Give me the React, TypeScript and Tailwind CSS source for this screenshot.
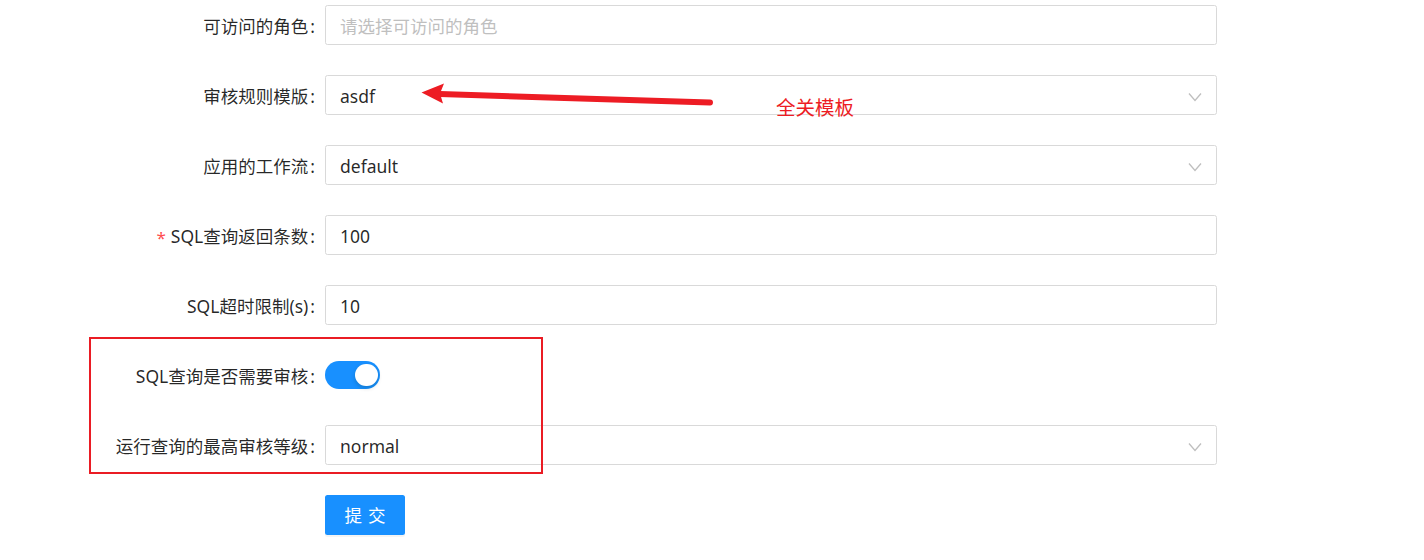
import React from "react";

const font = { fontFamily: '"Noto Sans", "Noto Sans CJK SC", sans-serif' };

function Chevron() {
  return (
    <svg width="14" height="10" viewBox="0 0 14 10" className="shrink-0">
      <path d="M1 1.5 L7 8.5 L13 1.5" fill="none" stroke="#bfbfbf" strokeWidth="1.3" />
    </svg>
  );
}

function Label({ text, required }: { text: string; required?: boolean }) {
  return (
    <div className="w-[325px] h-full shrink-0 flex justify-end items-center pt-[4px] text-[17.5px] text-black/85 leading-none">
      {required && <span className="text-[#ff4d4f] mr-[5px] text-[17px]">*</span>}
      <span>{text}</span>
      <span className="ml-[2px] mr-[10px]">:</span>
    </div>
  );
}

function Field({
  value,
  placeholder,
  select,
}: {
  value?: string;
  placeholder?: string;
  select?: boolean;
}) {
  return (
    <div className="w-[892px] h-[40px] border border-[#d9d9d9] rounded-[2.5px] bg-white flex items-center justify-between pt-[4px] pl-[14px] pr-[14px] text-[17.5px] leading-none">
      {value ? (
        <span className="text-black/85">{value}</span>
      ) : (
        <span className="text-[#bfbfbf]">{placeholder}</span>
      )}
      {select && <Chevron />}
    </div>
  );
}

function Row({ children }: { children: React.ReactNode }) {
  return <div className="flex h-[40px] mb-[30px] items-center">{children}</div>;
}

export default function App() {
  return (
    <div className="relative w-full h-[560px] bg-white overflow-hidden" style={font}>
      <div className="pt-[5px]">
        <Row>
          <Label text="可访问的角色" />
          <Field placeholder="请选择可访问的角色" />
        </Row>
        <Row>
          <Label text="审核规则模版" />
          <Field value="asdf" select />
        </Row>
        <Row>
          <Label text="应用的工作流" />
          <Field value="default" select />
        </Row>
        <Row>
          <Label text="SQL查询返回条数" required />
          <Field value="100" />
        </Row>
        <Row>
          <Label text="SQL超时限制(s)" />
          <Field value="10" />
        </Row>
        <Row>
          <Label text="SQL查询是否需要审核" />
          <div className="w-[55px] h-[27.5px] rounded-full bg-[#1890ff] relative">
            <div className="absolute right-[2.5px] top-[2.5px] w-[22.5px] h-[22.5px] rounded-full bg-white shadow-[0_2px_4px_0_rgba(0,35,11,0.2)]" />
          </div>
        </Row>
        <Row>
          <Label text="运行查询的最高审核等级" />
          <Field value="normal" select />
        </Row>
        <div className="flex">
          <div className="w-[325px] shrink-0" />
          <button className="w-[80px] h-[40px] bg-[#1890ff] rounded-[2.5px] text-white text-[17.5px] leading-none flex items-center justify-center pt-[2px] shadow-[0_2px_0_rgba(0,0,0,0.045)]">
            <span className="tracking-[0.34em] mr-[-0.34em]">提交</span>
          </button>
        </div>
      </div>

      {/* annotations */}
      <div className="absolute left-[89px] top-[337px] w-[454px] h-[137px] border-2 border-[#ea1c24] pointer-events-none" />
      <svg className="absolute left-0 top-0 pointer-events-none" width="1424" height="560">
        <line x1="440" y1="94" x2="710" y2="102.5" stroke="#ed1c24" strokeWidth="6" strokeLinecap="round" />
        <polygon points="421.5,92.5 444,83.5 440,93.5 443,103.5" fill="#ed1c24" />
      </svg>
      <div className="absolute left-[776px] top-[95px] text-[19.5px] leading-[26px] text-[#ed1c24] pointer-events-none">
        全关模板
      </div>
    </div>
  );
}
